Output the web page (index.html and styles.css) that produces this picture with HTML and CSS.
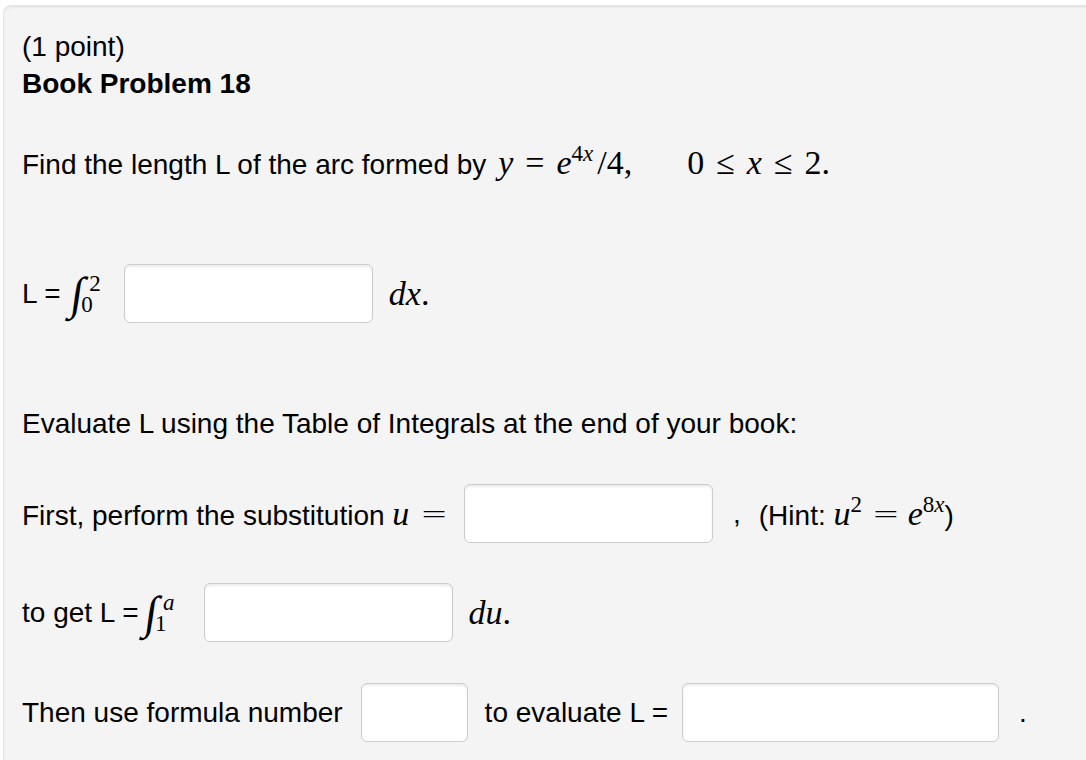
FILE: index.html
```html
<!DOCTYPE html>
<html>
<head>
<meta charset="utf-8">
<link rel="stylesheet" href="styles.css">
</head>
<body>
<div class="well">
  <div class="line">(1 point)</div>
  <div class="line title">Book Problem 18</div>

  <div class="line find">Find the length L of the arc formed by <span class="tm"><i>y</i><span class="rel">=</span><i>e</i><sup>4<i>x</i></sup>/4,</span><span class="tm range">0<span class="rel">≤</span><i>x</i><span class="rel">≤</span>2.</span></div>

  <div class="row r1">
    <span>L = </span>
    <span class="integral"><span class="int">∫</span><span class="limits"><span class="up">2</span><span class="lo">0</span></span></span>
    <span class="box w248"></span>
    <span class="mj"><i>dx</i>.</span>
  </div>

  <div class="line evaluate">Evaluate L using the Table of Integrals at the end of your book:</div>

  <div class="row r2">
    <span>First, perform the substitution <span class="mj"><i>u</i></span><span class="mj eq">=</span></span>
    <span class="box w248"></span>
    <span class="comma">,</span>
    <span class="hint">(Hint: <span class="mj"><i>u</i><sup>2</sup><span class="eq">=</span><i>e</i><sup>8<i>x</i></sup></span>)</span>
  </div>

  <div class="row r3">
    <span>to get L = </span>
    <span class="integral"><span class="int">∫</span><span class="limits"><span class="up"><i>a</i></span><span class="lo">1</span></span></span>
    <span class="box w248"></span>
    <span class="mj"><i>du</i>.</span>
  </div>

  <div class="row r4">
    <span>Then use formula number</span>
    <span class="box w106"></span>
    <span>to evaluate L =</span>
    <span class="box w316"></span>
    <span class="dot">.</span>
  </div>
</div>
</body>
</html>
```

FILE: styles.css
```css
html, body {
  margin: 0;
  padding: 0;
  background: #ffffff;
  overflow: hidden;
}

body {
  font-family: "Liberation Sans", Arial, Helvetica, sans-serif;
  font-size: 28px;
  color: #000;
}

.well {
  margin: 5px -20px 0 3px;
  padding: 22px 0 40px 18px;
  background: #f4f4f4;
  border: 1px solid #e3e3e3;
  border-radius: 8px;
  box-shadow: inset 0 2px 2px rgba(0, 0, 0, 0.05);
  min-height: 760px;
}

.line {
  line-height: 37px;
  height: 37px;
  white-space: nowrap;
}

.title {
  font-weight: bold;
}

.find {
  margin-top: 42px;
}

.tm {
  font-family: "Liberation Serif", "Times New Roman", serif;
  font-size: 34px;
  margin-left: 4px;
}

.tm i {
  font-style: italic;
}

.tm .rel {
  margin: 0 12px;
}

.tm sup {
  font-size: 23px;
  vertical-align: 13px;
  line-height: 0;
  margin-right: 4px;
}

.range {
  margin-left: 55px;
}

.row {
  display: flex;
  align-items: center;
  height: 59px;
  white-space: nowrap;
}

.r1 { margin-top: 83px; }
.evaluate { margin-top: 82px; }
.r2 { margin-top: 42px; }
.r3 { margin-top: 40px; }
.r4 { margin-top: 41px; }

.box {
  display: block;
  box-sizing: border-box;
  height: 59px;
  background: #fff;
  border: 1px solid #cccccc;
  border-radius: 6px;
  box-shadow: inset 0 2px 2px rgba(0, 0, 0, 0.075);
  flex: none;
}

.w248 { width: 249px; }
.w106 { width: 107px; }
.w316 { width: 317px; }

.mj {
  font-family: "Liberation Serif", "Times New Roman", serif;
  font-size: 34px;
}

.mj i { font-style: italic; }

.mj sup {
  font-size: 23px;
  vertical-align: 13px;
  line-height: 0;
}

.mj.eq, .mj .eq {
  font-family: "DejaVu Sans", sans-serif;
  font-size: 33px;
  font-weight: 300;
}

.integral {
  display: flex;
  align-items: center;
  font-family: "Liberation Serif", "Times New Roman", serif;
  margin-left: 10px;
}

.int {
  font-size: 46px;
  line-height: 46px;
  font-style: italic;
  transform: skewX(-8deg);
}

.limits {
  display: flex;
  flex-direction: column;
  font-size: 23px;
  line-height: 21px;
  margin-left: 0;
}

.limits .up { margin-left: 6px; }
.limits .lo { margin-left: -2px; }

.r1 .box { margin-left: 23px; }
.r1 .mj { margin-left: 16px; }

.r2 .eq { margin-left: 11px; }
.r2 .box { margin-left: 16px; }
.r2 .comma { margin-left: 20px; }
.r2 .hint { margin-left: 18px; }
.r2 .hint .eq { margin: 0 8px 0 10px; }

.r3 .integral { margin-left: 6px; }
.r3 .box { margin-left: 29px; }
.r3 .mj { margin-left: 16px; }

.r4 .w106 { margin-left: 18px; margin-right: 17px; }
.r4 .w316 { margin-left: 14px; }
.r4 .dot { margin-left: 20px; }
```
